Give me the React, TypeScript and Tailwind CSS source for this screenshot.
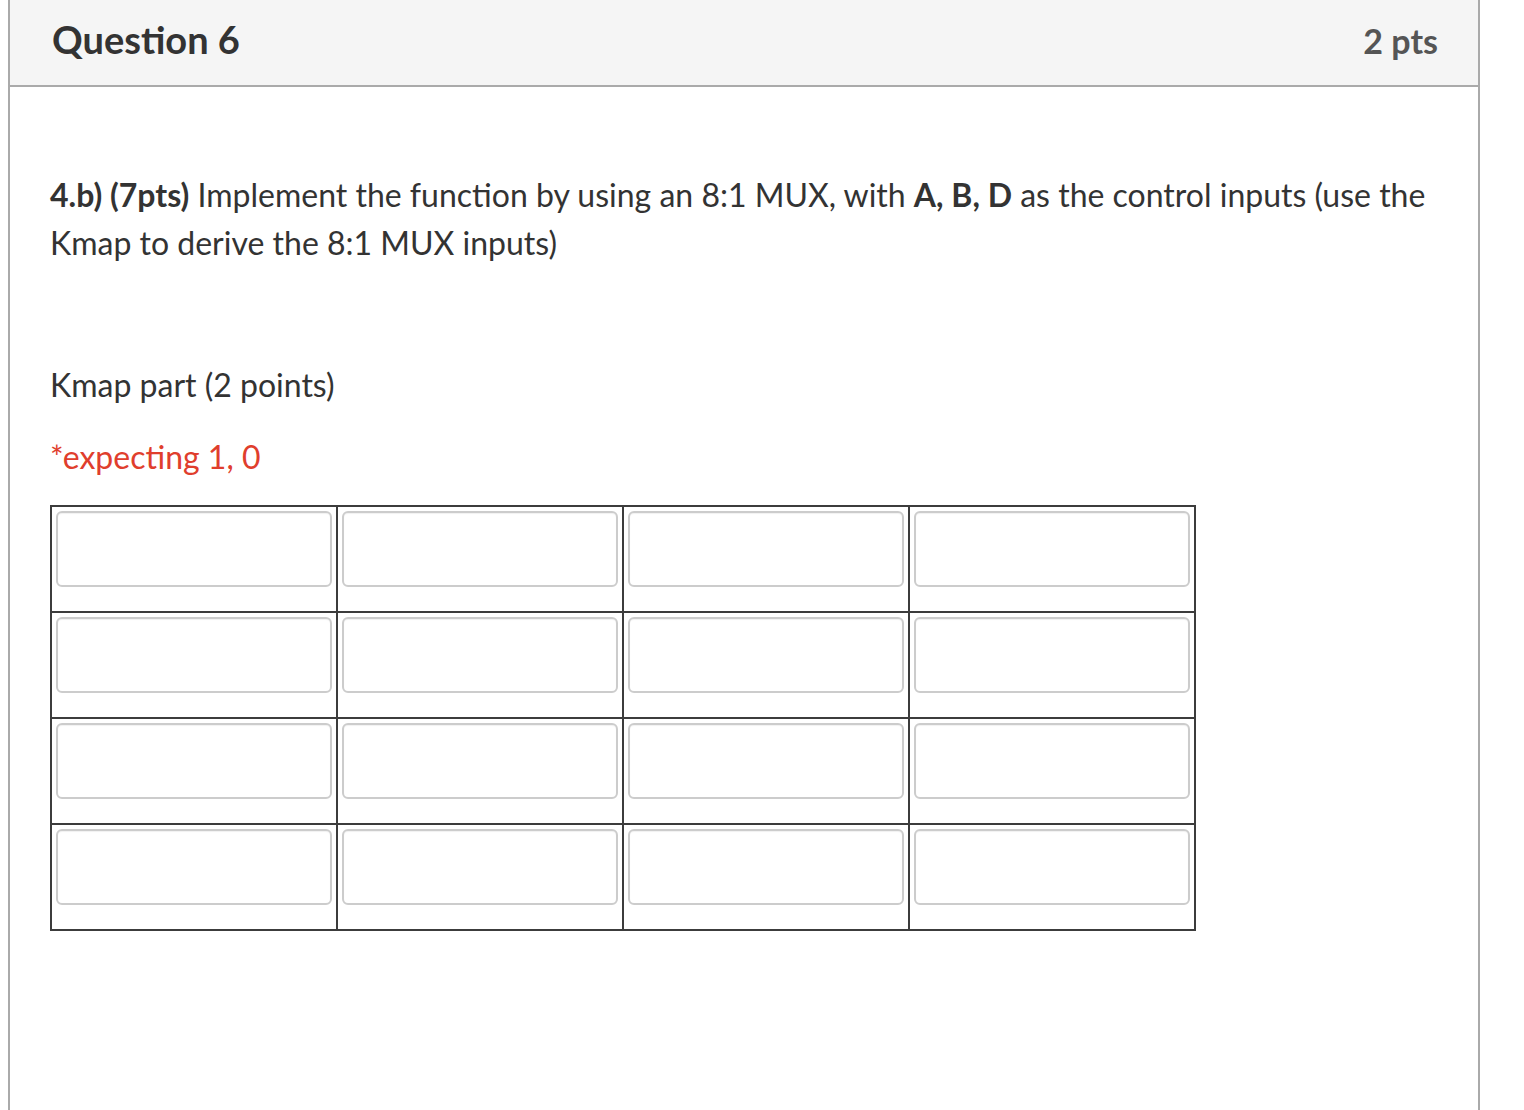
import React from 'react';

const rows = [0, 1, 2, 3];
const cols = [0, 1, 2, 3];

export default function App() {
  return (
    <div className="min-h-[1110px] w-[1524px] bg-white" style={{ fontFamily: 'Lato, "Noto Sans", sans-serif' }}>
      <div className="ml-[8px] w-[1472px] min-h-[1110px] border-x-2 border-[#aaaaaa] bg-white">
        {/* Header */}
        <div className="flex h-[87px] items-baseline justify-between border-b-2 border-[#aaaaaa] bg-[#f5f5f5] pl-[42px] pr-[40px] pt-[17px]">
          <h2 className="text-[38px] font-bold leading-[1.2] text-[#333333]">Question 6</h2>
          <span className="text-[34px] font-bold leading-[1.2] text-[#555555]">2 pts</span>
        </div>

        {/* Body */}
        <div className="pl-[40px] pr-[38px] pt-[84px] text-[32px] leading-[48px] text-[#333333]">
          <p>
            <strong>4.b) (7pts)</strong> Implement the function by using an 8:1 MUX, with <strong>A, B, D</strong> as the control inputs (use the Kmap to derive the 8:1 MUX inputs)
          </p>
          <p className="mt-[94px]">Kmap part (2 points)</p>
          <p className="mt-[24px] text-[#e03e2d]">*expecting 1, 0</p>

          <table className="mt-[24px] border-collapse border-2 border-[#3c3c3c]">
            <tbody>
              {rows.map((r) => (
                <tr key={r}>
                  {cols.map((c) => (
                    <td key={c} className="w-[286px] border-2 border-[#3c3c3c] px-[4px] pb-[24px] pt-[4px] align-top">
                      <input
                        type="text"
                        aria-label={`Kmap cell ${r + 1}-${c + 1}`}
                        className="block h-[76px] w-full rounded-[6px] border-2 border-[#cccccc] bg-white shadow-[inset_0_1px_1px_rgba(0,0,0,0.06)] outline-none"
                      />
                    </td>
                  ))}
                </tr>
              ))}
            </tbody>
          </table>
        </div>
      </div>
    </div>
  );
}
